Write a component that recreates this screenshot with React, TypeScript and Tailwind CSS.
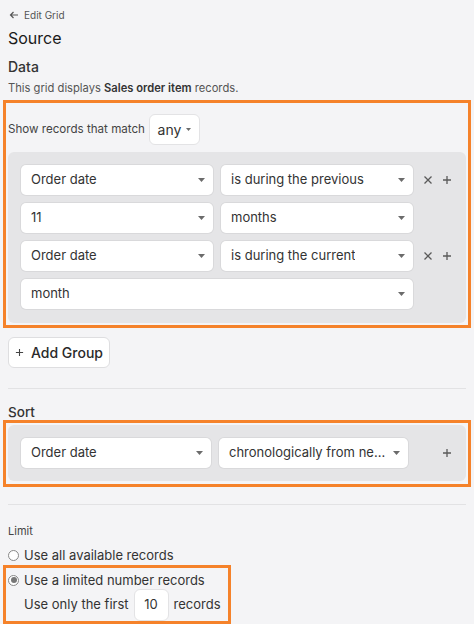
import React from 'react';

function Caret() {
  return (
    <svg width="7" height="4" viewBox="0 0 7 4" className="shrink-0">
      <path d="M0 0 L7 0 L3.5 4 Z" fill="#6b6b6b" />
    </svg>
  );
}

function Select({ label, className = '' }: { label: string; className?: string }) {
  return (
    <div
      className={`flex h-[30px] shrink-0 items-center justify-between rounded-[5px] bg-white pl-[10px] pr-[8px] text-[13px] text-[#333] shadow-[0_0_0_1px_rgba(0,0,0,0.05)] ${className}`}
    >
      <span className="truncate">{label}</span>
      <Caret />
    </div>
  );
}

function XIcon() {
  return (
    <svg width="10" height="10" viewBox="0 0 10 10">
      <path d="M1.5 1.5 L8.5 8.5 M8.5 1.5 L1.5 8.5" stroke="#5a5a5a" strokeWidth="1.3" />
    </svg>
  );
}

function PlusIcon() {
  return (
    <svg width="10" height="10" viewBox="0 0 10 10">
      <path d="M5 1 L5 9 M1 5 L9 5" stroke="#5a5a5a" strokeWidth="1.3" />
    </svg>
  );
}

function Actions({ remove = true }: { remove?: boolean }) {
  return (
    <div className="flex flex-1 items-center justify-end gap-[9px] pr-[1px]">
      {remove ? <XIcon /> : null}
      <PlusIcon />
    </div>
  );
}

export default function App() {
  return (
    <div
      className="h-[624px] w-[474px] overflow-hidden bg-[#f4f4f6] text-[#222]"
      style={{ fontFamily: 'Inter, "Noto Sans", sans-serif' }}
    >
      {/* Header */}
      <div className="px-2 pt-[8px]">
        <div className="flex items-center gap-[5px] pl-[1px] text-[10px] leading-[14px] text-[#555]">
          <svg width="10" height="10" viewBox="0 0 10 10">
            <path d="M9 5 L1.5 5 M4.5 2 L1.5 5 L4.5 8" stroke="#555" strokeWidth="1.2" fill="none" />
          </svg>
          Edit Grid
        </div>
        <h1 className="mt-[6px] text-[16px] leading-[20px] text-[#1a1a1a]">Source</h1>
        <h2 className="mt-[10px] text-[14px] font-medium leading-[18px] text-[#333]">Data</h2>
        <p className="mt-[5px] text-[11.2px] leading-[15px] text-[#555]">
          This grid displays <span className="font-semibold text-[#333]">Sales order item</span> records.
        </p>
      </div>

      {/* Filter box */}
      <div className="mx-[3px] mt-[4px] border-[3px] border-[#f5822a] px-[2px] pb-[2px] pt-[11px]">
        <div className="flex items-center gap-[4px]">
          <span className="text-[11.6px] text-[#444]">Show records that match</span>
          <div className="flex h-[31px] w-[51px] items-center justify-center gap-[5px] rounded-[6px] border border-[#e3e3e5] bg-white text-[14px] text-[#333]">
            any
            <svg width="5" height="3" viewBox="0 0 5 3">
              <path d="M0 0 L5 0 L2.5 3 Z" fill="#6b6b6b" />
            </svg>
          </div>
        </div>
        <div className="mt-[7px] flex flex-col gap-[8px] rounded-[6px] bg-[#e5e5e7] pb-[14px] pl-[13px] pr-[13px] pt-[13px]">
          <div className="flex items-center gap-[8px]">
            <Select label="Order date" className="w-[192px]" />
            <Select label="is during the previous" className="w-[192px]" />
            <Actions />
          </div>
          <div className="flex items-center gap-[8px]">
            <Select label="11" className="w-[192px]" />
            <Select label="months" className="w-[192px]" />
          </div>
          <div className="flex items-center gap-[8px]">
            <Select label="Order date" className="w-[192px]" />
            <Select label="is during the current" className="w-[192px]" />
            <Actions />
          </div>
          <div className="flex items-center gap-[8px]">
            <Select label="month" className="w-[392px]" />
          </div>
        </div>
      </div>

      <div className="px-2">
        <button className="mt-[9px] flex h-[31px] w-[102px] items-center justify-center gap-[7px] rounded-[6px] border border-[#dedee0] bg-white text-[14px] font-medium text-[#2a2a2a]">
          <svg width="9" height="9" viewBox="0 0 10 10">
            <path d="M5 1 L5 9 M1 5 L9 5" stroke="#444" strokeWidth="1.2" />
          </svg>
          Add Group
        </button>
        <div className="mt-[20px] h-px bg-[#e2e2e4]" />
        <h2 className="mt-[14px] text-[13.5px] font-medium leading-[18px] text-[#333]">Sort</h2>
      </div>

      {/* Sort box */}
      <div className="mx-[3px] mt-[-1px] border-[3px] border-[#f5822a] px-[2px] pb-[3px] pt-[2px]">
        <div className="flex items-center gap-[8px] rounded-[6px] bg-[#e5e5e7] pb-[13px] pl-[13px] pr-[13px] pt-[13px]">
          <Select label="Order date" className="w-[190px]" />
          <Select label="chronologically from ne..." className="w-[189px]" />
          <div className="flex flex-1 justify-end pr-[1px]">
            <PlusIcon />
          </div>
        </div>
      </div>

      <div className="px-2">
        <div className="mt-[17px] h-px bg-[#e2e2e4]" />
        <div className="mt-[19px] text-[11px] leading-[14px] text-[#444]">Limit</div>
        <label className="mt-[8px] flex items-center gap-[5px] text-[13px] leading-[18px] text-[#333]">
          <span className="h-[11px] w-[11px] rounded-full border border-[#888] bg-white" />
          Use all available records
        </label>
      </div>

      {/* Limit box */}
      <div className="mx-[3px] mt-[1px] w-[228px] border-[3px] border-[#f5822a] pl-[2px] pt-[3px]">
        <label className="flex items-center gap-[5px] text-[13px] leading-[18px] text-[#333]">
          <span className="flex h-[11px] w-[11px] items-center justify-center rounded-full border border-[#888] bg-white">
            <span className="h-[6px] w-[6px] rounded-full bg-[#777]" />
          </span>
          Use a limited number records
        </label>
        <div className="flex items-center gap-[5px] pl-[16px] text-[13px] text-[#333]">
          Use only the first
          <span className="flex h-[32px] w-[35px] items-center justify-center rounded-[6px] border border-[#e3e3e5] bg-white">
            10
          </span>
          records
        </div>
      </div>
    </div>
  );
}
